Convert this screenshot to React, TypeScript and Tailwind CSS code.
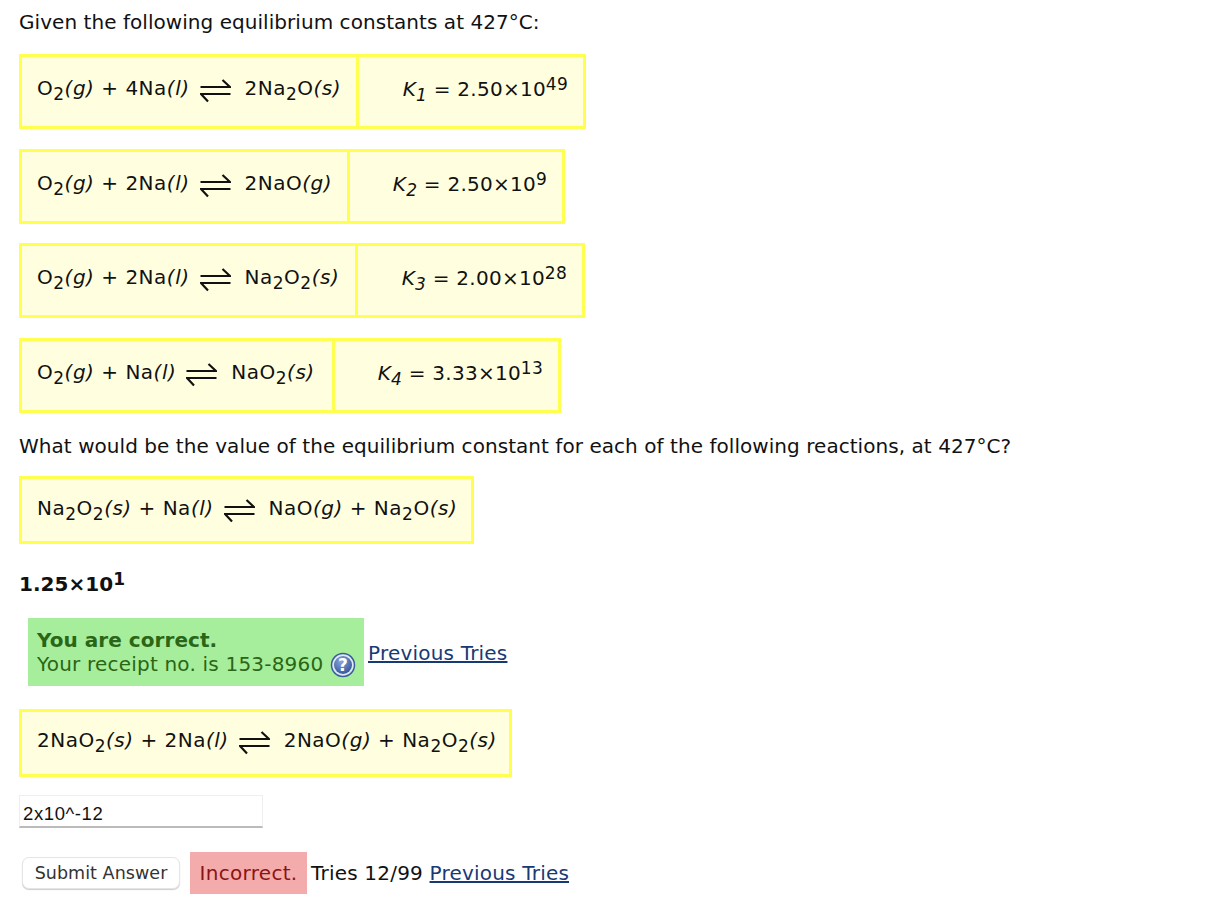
import React from "react";

const Arrow = () => (
  <svg width="31" height="26" viewBox="0 0 31 26" className="inline-block align-[-8px] ml-[10px] mr-[14px]">
    <path d="M0.5 10H30L22.5 3" fill="none" stroke="#111" strokeWidth="2.2" />
    <path d="M30.5 17H1L8 24.5" fill="none" stroke="#111" strokeWidth="2.2" />
  </svg>
);
const Sub = ({ children }: { children: React.ReactNode }) => (
  <sub className="text-[17px] leading-none align-[-5px] bottom-auto">{children}</sub>
);
const Sup = ({ children }: { children: React.ReactNode }) => (
  <sup className="text-[17px] leading-none align-[6px] top-auto">{children}</sup>
);
const P = ({ s }: { s: string }) => <i>({s})</i>;

const Box = ({ children, className }: { children: React.ReactNode; className: string }) => (
  <div className={`flex border-[3px] border-[#ffff4f] bg-[#ffffe0] ${className}`}>{children}</div>
);
const KRow = ({ w1, w2, eq, k }: { w1: string; w2: string; eq: React.ReactNode; k: React.ReactNode }) => (
  <Box className="w-fit h-[75px]">
    <div className={`${w1} pl-[15px] pt-[19px] whitespace-nowrap tracking-[0.5px]`}>{eq}</div>
    <div className={`${w2} border-l-[3px] border-[#ffff4f] pt-[19px] pr-[15px] whitespace-nowrap text-right tracking-[0.25px]`}>{k}</div>
  </Box>
);

export default function App() {
  return (
    <div className="w-[1224px] h-[900px] overflow-hidden bg-white text-[#111] text-[20px] leading-[24px] tracking-[0.05px] pl-[19px] pt-[10px] font-['DejaVu_Sans','Liberation_Sans',sans-serif]">
      <p>Given the following equilibrium constants at 427°C:</p>
      <div className="mt-[20px] flex flex-col gap-[19.5px]">
        <KRow w1="w-[334px]" w2="w-[227px]"
          eq={<>O<Sub>2</Sub><P s="g" /> + 4Na<P s="l" /><Arrow />2Na<Sub>2</Sub>O<P s="s" /></>}
          k={<><i>K<Sub>1</Sub></i> = 2.50×10<Sup>49</Sup></>} />
        <KRow w1="w-[325px]" w2="w-[215px]"
          eq={<>O<Sub>2</Sub><P s="g" /> + 2Na<P s="l" /><Arrow />2NaO<P s="g" /></>}
          k={<><i>K<Sub>2</Sub></i> = 2.50×10<Sup>9</Sup></>} />
        <KRow w1="w-[333px]" w2="w-[227px]"
          eq={<>O<Sub>2</Sub><P s="g" /> + 2Na<P s="l" /><Arrow />Na<Sub>2</Sub>O<Sub>2</Sub><P s="s" /></>}
          k={<><i>K<Sub>3</Sub></i> = 2.00×10<Sup>28</Sup></>} />
        <KRow w1="w-[310px]" w2="w-[226px]"
          eq={<>O<Sub>2</Sub><P s="g" /> + Na<P s="l" /><Arrow />NaO<Sub>2</Sub><P s="s" /></>}
          k={<><i>K<Sub>4</Sub></i> = 3.33×10<Sup>13</Sup></>} />
      </div>
      <p className="mt-[21px]">What would be the value of the equilibrium constant for each of the following reactions, at 427°C?</p>
      <Box className="mt-[18px] w-[455px] h-[68px] pl-[15px] pt-[17px] whitespace-nowrap tracking-[0.5px]">
        <div>Na<Sub>2</Sub>O<Sub>2</Sub><P s="s" /> + Na<P s="l" /><Arrow />NaO<P s="g" /> + Na<Sub>2</Sub>O<P s="s" /></div>
      </Box>
      <p className="mt-[27px] font-bold">1.25×10<Sup>1</Sup></p>
      <div className="mt-[22px] ml-[9px] flex items-start">
        <div className="w-[336px] h-[68px] bg-[#a6ee9b] text-[#2a6616] pl-[9px] pt-[10px]">
          <div className="font-bold h-[24px]">You are correct.</div>
          <div className="flex items-center whitespace-nowrap h-[24px] tracking-[0.2px]">
            Your receipt no. is 153-8960
            <svg width="26" height="26" viewBox="0 0 26 26" className="ml-[7px] mt-[3px] shrink-0">
              <defs>
                <radialGradient id="q" cx="40%" cy="30%" r="80%">
                  <stop offset="0" stopColor="#8aa5d8" />
                  <stop offset="1" stopColor="#2c4f94" />
                </radialGradient>
              </defs>
              <circle cx="13" cy="13" r="11.5" fill="#dfe8f5" stroke="#3b5c9c" strokeWidth="1.5" />
              <circle cx="13" cy="13" r="9" fill="url(#q)" />
              <text x="13" y="19" textAnchor="middle" fontSize="17" fontWeight="700" fill="#fff">?</text>
            </svg>
          </div>
        </div>
        <a className="ml-[4px] mt-[23px] text-[#173a76] underline whitespace-nowrap tracking-[0.2px]">Previous Tries</a>
      </div>
      <Box className="mt-[23px] w-[493px] h-[68px] pl-[15px] pt-[16px] whitespace-nowrap tracking-[0.5px]">
        <div>2NaO<Sub>2</Sub><P s="s" /> + 2Na<P s="l" /><Arrow />2NaO<P s="g" /> + Na<Sub>2</Sub>O<Sub>2</Sub><P s="s" /></div>
      </Box>
      <input
        readOnly
        value="2x10^-12"
        className="block mt-[18px] w-[244px] h-[33px] px-[3px] pt-[7px] bg-white border border-[#eeeeee] border-b-[#bbbbbb] border-b-2 text-[18.5px] tracking-[0.6px] text-[#111] outline-none font-['Liberation_Sans',sans-serif]"
      />
      <div className="mt-[24px] flex items-center h-[42px] whitespace-nowrap">
        <button className="ml-[3px] w-[158px] h-[32px] bg-white rounded-[7px] border border-[#e5e5e5] shadow-[0_1px_1px_rgba(0,0,0,0.2)] text-[17.5px] text-[#333]">Submit Answer</button>
        <div className="ml-[10px] w-[117px] h-[42px] bg-[#f4abab] text-[#8a1414] flex items-center justify-center tracking-[0.3px]">Incorrect.</div>
        <span className="ml-[4px] tracking-[0.2px]">Tries 12/99 <a className="text-[#173a76] underline">Previous Tries</a></span>
      </div>
    </div>
  );
}
